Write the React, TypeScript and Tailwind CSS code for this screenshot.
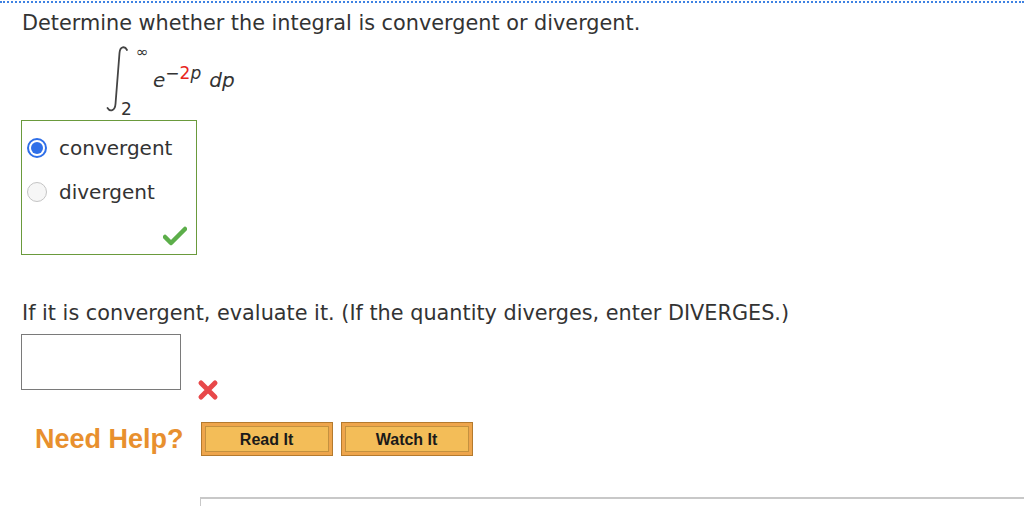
import { useState } from 'react'

function Radio({ checked }: { checked: boolean }) {
  return checked ? (
    <span className="flex h-[20px] w-[20px] items-center justify-center rounded-full border-[2px] border-[#2f6fe8] bg-white">
      <span className="h-[12px] w-[12px] rounded-full bg-[#2f6fe8]" />
    </span>
  ) : (
    <span className="h-[20px] w-[20px] rounded-full border border-[#c4c4c4] bg-[#f6f6f6]" />
  )
}

function HelpButton({ label }: { label: string }) {
  return (
    <button
      type="button"
      className="flex h-[34px] w-[132px] items-stretch border border-[#b47a2e] bg-[#eea54c] p-[3px]"
    >
      <span className="flex flex-1 items-center justify-center border border-[#c4913f] bg-[#f3bd58] pt-[1px] font-['Liberation_Sans',Arial,sans-serif] text-[16px] font-bold text-[#1a1a1a]">
        {label}
      </span>
    </button>
  )
}

export default function App() {
  const [choice] = useState<'convergent' | 'divergent'>('convergent')

  return (
    <div className="h-[506px] w-[1024px] overflow-hidden bg-white font-[Verdana,'DejaVu_Sans',sans-serif] text-[#333]">
      <div className="mt-[1px] border-t-2 border-dotted border-[#3f82e2]" />

      <div className="pl-[22px] pt-[8px] text-[20.8px] leading-[24px]">
        Determine whether the integral is convergent or divergent.
      </div>

      {/* integral */}
      <div className="relative ml-[104px] mt-[12px] h-[66px] w-[160px]">
        <svg className="absolute left-0 top-[-2px]" width="28" height="68" viewBox="0 0 28 68">
          <path
            d="M23 5 C21 1 16 1 15.5 8 L11.5 59 C11 66 6 67 3.5 63"
            fill="none"
            stroke="#444"
            strokeWidth="1.8"
            strokeLinecap="round"
          />
        </svg>
        <span className="absolute left-[32px] top-[-6px] text-[15px] text-[#333]">∞</span>
        <span className="absolute left-[17px] top-[51px] text-[17px] leading-[22px] text-[#333]">2</span>
        <span className="absolute left-[49px] top-[18px] text-[20px] italic text-[#333]">
          e
          <span className="relative top-[-8px] text-[17px] not-italic">
            −<span className="text-[#e8251c]">2</span>
            <span className="italic">p</span>
          </span>
          <span className="ml-[8px]">dp</span>
        </span>
      </div>

      {/* choices */}
      <div className="ml-[21px] mt-[7px] flex h-[135px] w-[176px] flex-col border border-[#6a9a3c] pl-[5px] pt-[15px]">
        <label className="flex items-center gap-[12px] text-[20px] leading-[24px]">
          <Radio checked={choice === 'convergent'} />
          <span>convergent</span>
        </label>
        <label className="mt-[20px] flex items-center gap-[12px] text-[20px] leading-[24px]">
          <Radio checked={choice === 'divergent'} />
          <span>divergent</span>
        </label>
        <div className="mb-[8px] mt-auto flex justify-end pr-[9px]">
          <svg width="24" height="20" viewBox="0 0 24 20">
            <path
              d="M2 11 L8 17 L22 3"
              fill="none"
              stroke="#5cae4a"
              strokeWidth="4.5"
              strokeLinecap="round"
              strokeLinejoin="round"
            />
          </svg>
        </div>
      </div>

      <div className="pl-[22px] pt-[46px] text-[20.8px] leading-[24px]">
        If it is convergent, evaluate it. (If the quantity diverges, enter DIVERGES.)
      </div>

      {/* answer */}
      <div className="ml-[21px] mt-[9px] flex items-end gap-[16px]">
        <input
          className="h-[56px] w-[160px] border border-[#7a7a7a] bg-white outline-none"
          readOnly
        />
        <svg className="mb-[-11px]" width="22" height="22" viewBox="0 0 22 22">
          <path
            d="M4 4 L18 18 M18 4 L4 18"
            stroke="#e8484a"
            strokeWidth="5"
            strokeLinecap="round"
          />
        </svg>
      </div>

      {/* need help */}
      <div className="ml-[35px] mt-[32px] flex items-center gap-[8px]">
        <span className="mr-[9px] font-['Liberation_Sans',Arial,sans-serif] text-[27px] font-bold leading-[32px] text-[#e8902e]">
          Need Help?
        </span>
        <HelpButton label="Read It" />
        <HelpButton label="Watch It" />
      </div>

      <div className="ml-[200px] mt-[41px] h-[20px] border-l border-t-2 border-[#c8c8c8]" />
    </div>
  )
}
